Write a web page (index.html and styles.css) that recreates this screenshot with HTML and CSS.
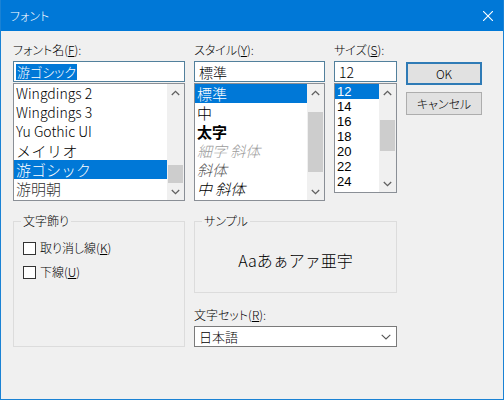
FILE: index.html
```html
<!DOCTYPE html>
<html lang="ja">
<head>
<meta charset="utf-8">
<title>フォント</title>
<link rel="stylesheet" href="styles.css">
</head>
<body>
<div class="window">
  <div class="titlebar">
    <span class="title">フォント</span>
    <svg class="close" width="10" height="10" viewBox="0 0 10 10"><path d="M0 0L10 10M10 0L0 10" stroke="#fff" stroke-width="1.1" fill="none"/></svg>
  </div>
  <div class="body">
    <div class="top">
      <div class="col col-font">
        <div class="label">フォント名(<u>F</u>):</div>
        <div class="edit"><span class="seltext">游ゴシック</span></div>
        <div class="listbox lb-font">
          <div class="items">
            <div class="item latin">Wingdings 2</div>
            <div class="item latin">Wingdings 3</div>
            <div class="item latin">Yu Gothic UI</div>
            <div class="item meiryo">メイリオ</div>
            <div class="item sel">游ゴシック</div>
            <div class="item mincho">游明朝</div>
          </div>
          <div class="sb">
            <div class="sb-btn"><svg width="9" height="6" viewBox="0 0 9 6"><polyline points="0.8,5 4.5,1.3 8.2,5" stroke="#606060" stroke-width="1.3" fill="none"/></svg></div>
            <div class="sb-track"><div class="thumb thumb-font"></div></div>
            <div class="sb-btn"><svg width="9" height="6" viewBox="0 0 9 6"><polyline points="0.8,1 4.5,4.7 8.2,1" stroke="#606060" stroke-width="1.3" fill="none"/></svg></div>
          </div>
        </div>
      </div>
      <div class="col col-style">
        <div class="label">スタイル(<u>Y</u>):</div>
        <div class="edit"><span class="plain">標準</span></div>
        <div class="listbox lb-style">
          <div class="items">
            <div class="item sel">標準</div>
            <div class="item">中</div>
            <div class="item bold">太字</div>
            <div class="item light-italic">細字 斜体</div>
            <div class="item italic grey">斜体</div>
            <div class="item italic">中 斜体</div>
          </div>
          <div class="sb">
            <div class="sb-btn"><svg width="9" height="6" viewBox="0 0 9 6"><polyline points="0.8,5 4.5,1.3 8.2,5" stroke="#606060" stroke-width="1.3" fill="none"/></svg></div>
            <div class="sb-track"><div class="thumb thumb-style"></div></div>
            <div class="sb-btn"><svg width="9" height="6" viewBox="0 0 9 6"><polyline points="0.8,1 4.5,4.7 8.2,1" stroke="#606060" stroke-width="1.3" fill="none"/></svg></div>
          </div>
        </div>
      </div>
      <div class="col col-size">
        <div class="label">サイズ(<u>S</u>):</div>
        <div class="edit"><span class="plain">12</span></div>
        <div class="listbox lb-size">
          <div class="items">
            <div class="item small sel">12</div>
            <div class="item small">14</div>
            <div class="item small">16</div>
            <div class="item small">18</div>
            <div class="item small">20</div>
            <div class="item small">22</div>
            <div class="item small">24</div>
          </div>
          <div class="sb">
            <div class="sb-btn"><svg width="9" height="6" viewBox="0 0 9 6"><polyline points="0.8,5 4.5,1.3 8.2,5" stroke="#606060" stroke-width="1.3" fill="none"/></svg></div>
            <div class="sb-track"><div class="thumb thumb-size"></div></div>
            <div class="sb-btn"><svg width="9" height="6" viewBox="0 0 9 6"><polyline points="0.8,1 4.5,4.7 8.2,1" stroke="#606060" stroke-width="1.3" fill="none"/></svg></div>
          </div>
        </div>
      </div>
      <div class="buttons">
        <button class="btn default">OK</button>
        <button class="btn">キャンセル</button>
      </div>
    </div>
    <div class="bottom">
      <fieldset class="group effects">
        <legend>文字飾り</legend>
        <div class="check first"><span class="cb"></span>取り消し線(<u>K</u>)</div>
        <div class="check"><span class="cb"></span>下線(<u>U</u>)</div>
      </fieldset>
      <div class="right">
        <fieldset class="group sample">
          <legend>サンプル</legend>
          <div class="sample-text">Aaあぁアァ亜宇</div>
        </fieldset>
        <div class="label charset-label">文字セット(<u>R</u>):</div>
        <div class="combo">
          <span>日本語</span>
          <svg width="10" height="6" viewBox="0 0 10 6"><polyline points="0.7,0.8 5,5 9.3,0.8" stroke="#555" stroke-width="1.1" fill="none"/></svg>
        </div>
      </div>
    </div>
  </div>
</div>
</body>
</html>
```

FILE: styles.css
```css
html, body {
  margin: 0;
  padding: 0;
  background: #f0f0f0;
}

.window {
  width: 504px;
  height: 400px;
  box-sizing: border-box;
  border: 1px solid #1a82d4;
  border-top: none;
  background: #f0f0f0;
  font-family: "Noto Sans CJK JP", sans-serif;
  font-weight: 300;
  font-size: 12px;
  color: #000;
  font-feature-settings: "palt";
  overflow: hidden;
}

.titlebar {
  height: 31px;
  background: #0078d7;
  color: #fff;
  display: flex;
  align-items: center;
  padding-left: 9px;
}

.title {
  font-size: 12px;
  line-height: 16px;
}

.close {
  margin-left: auto;
  margin-right: 10px;
}

.body {
  padding: 11px 0 0 12px;
}

.top {
  display: flex;
  gap: 9px;
}

.col-font { width: 172px; }
.col-style { width: 131px; }
.col-size { width: 63px; }

.label {
  line-height: 16px;
  height: 16px;
  margin-bottom: 3px;
  white-space: nowrap;
}

.edit {
  height: 21px;
  box-sizing: border-box;
  border: 1px solid #52809c;
  background: #fff;
  padding: 0 2px;
  display: flex;
  align-items: center;
  font-size: 14px;
}

.seltext {
  background: #0078d7;
  color: #fff;
  line-height: 16px;
  padding: 0 1px;
  font-size: 13px;
}

.plain {
  padding-left: 2px;
  line-height: 16px;
}

.listbox {
  margin-top: 1px;
  box-sizing: border-box;
  border: 1px solid #8a8f96;
  background: #fff;
  display: flex;
  overflow: hidden;
}

.lb-font, .lb-style { height: 118px; }
.lb-size { height: 110px; }

.items {
  flex: 1;
  min-width: 0;
  overflow: hidden;
}

.item {
  height: 19px;
  line-height: 19px;
  padding-left: 2px;
  font-size: 15px;
  white-space: nowrap;
  font-feature-settings: normal;
}

.item.latin {
  font-size: 14px;
}

.item.small {
  height: 15px;
  line-height: 15px;
  font-family: "Liberation Sans", sans-serif;
  font-weight: 400;
  font-size: 13px;
}

.item.sel {
  background: #0078d7;
  color: #fff;
}

.item.meiryo { font-size: 15px; letter-spacing: 0.5px; }
.item.mincho { color: #333; }
.item.bold { font-weight: 700; }
.item.italic { font-style: italic; }
.item.grey { color: #555; }
.item.light-italic {
  font-style: italic;
  font-weight: 200;
  color: #9c9c9c;
}

.sb {
  width: 17px;
  flex: none;
  background: #f0f0f0;
  display: flex;
  flex-direction: column;
}

.sb-btn {
  height: 17px;
  display: flex;
  align-items: center;
  justify-content: center;
}

.sb-track {
  flex: 1;
  display: flex;
  flex-direction: column;
}

.thumb {
  margin: 0 1px;
  background: #cdcdcd;
}

.thumb-font { margin-top: auto; height: 18px; }
.thumb-style { margin-top: 11px; height: 60px; }
.thumb-size { margin-top: 19px; height: 31px; }

.buttons {
  width: 76px;
  padding-top: 20px;
  display: flex;
  flex-direction: column;
  gap: 7px;
}

.btn {
  height: 23px;
  width: 76px;
  box-sizing: border-box;
  border: 1px solid #adadad;
  background: #e1e1e1;
  font-family: inherit;
  font-weight: 300;
  font-size: 12px;
  color: #000;
  padding: 0;
  font-feature-settings: "palt";
}

.btn.default {
  border: 2px solid #2f7bb6;
}

.bottom {
  display: flex;
  gap: 9px;
  margin-top: 12px;
}

.group {
  margin: 0;
  padding: 0;
  border: 1px solid #dcdcdc;
  box-sizing: border-box;
  min-width: 0;
}

.group legend {
  margin-left: 7px;
  padding: 0 2px;
  line-height: 16px;
  font-size: 12px;
}

.effects {
  width: 172px;
  height: 134px;
}

.check {
  display: flex;
  align-items: center;
  height: 16px;
  line-height: 16px;
  margin-top: 8px;
  padding-left: 9px;
  white-space: nowrap;
}

.check.first { margin-top: 11px; }

.cb {
  width: 13px;
  height: 13px;
  box-sizing: border-box;
  border: 1px solid #333;
  background: #fff;
  margin-right: 4px;
}

.right {
  width: 203px;
  display: flex;
  flex-direction: column;
}

.sample {
  height: 80px;
}

.sample-text {
  text-align: center;
  font-size: 16px;
  line-height: 20px;
  padding-top: 21px;
  font-feature-settings: normal;
}

.charset-label {
  margin-top: 14px;
}

.combo {
  height: 21px;
  box-sizing: border-box;
  border: 1px solid #7a7a7a;
  background: #fff;
  display: flex;
  align-items: center;
  justify-content: space-between;
  padding: 0 5px 0 4px;
  font-size: 13px;
}
```
